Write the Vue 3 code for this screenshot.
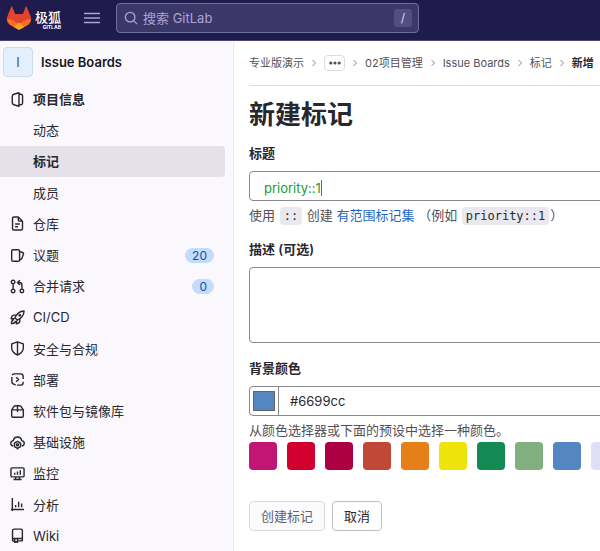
<script setup>
import { ref } from 'vue'

const search = ref('')
const title = ref('priority::1')
const description = ref('')
const color = ref('#6699cc')
const pickerColor = ref('#5487c2')

const nav = [
  { label: '项目信息', icon: 'project', bold: true },
  { label: '动态', sub: true },
  { label: '标记', sub: true, active: true, bold: true },
  { label: '成员', sub: true },
  { label: '仓库', icon: 'doc' },
  { label: '议题', icon: 'issues', count: 20 },
  { label: '合并请求', icon: 'merge', count: 0 },
  { label: 'CI/CD', icon: 'rocket' },
  { label: '安全与合规', icon: 'shield' },
  { label: '部署', icon: 'deploy' },
  { label: '软件包与镜像库', icon: 'package' },
  { label: '基础设施', icon: 'cloud' },
  { label: '监控', icon: 'monitor' },
  { label: '分析', icon: 'chart' },
  { label: 'Wiki', icon: 'book' },
]

const icons = {
  project: 'M9.6 .8 4.2 2.4Q2.4 3 2.4 4.6v6.8q0 1.600 1.800 2.200L9.600 15.200zM9.600 2.400h2q1.800 0 1.800 1.800v7.600q0 1.800-1.800 1.800h-2',
  doc: 'M8.8 1H4.2Q2.7 1 2.7 2.5v11Q2.7 15 4.2 15h7.6q1.5 0 1.5-1.5v-8zM8.8 1v3.2q0 1.3 1.3 1.3h3.2M5.5 8.6h5M5.5 11.5h3',
  issues: 'M3.3 1.8h5.4q1.5 0 1.5 1.5v9.4q0 1.5-1.5 1.5H3.3q-1.5 0-1.5-1.5V3.3q0-1.5 1.5-1.5zM10.2 3.6l3.2 1.2q1.3.5.9 1.8l-1.5 4.2q-.5 1.3-2.6 2.2',
  merge: 'M3.3 5.2v5.6M12.7 10.8V6.3q0-2.5-2.5-2.5H8.4M10.6 1.2 8 3.8l2.6 2.6M5.2 3.3a1.9 1.9 0 1 1-3.8 0a1.9 1.9 0 1 1 3.8 0M5.2 12.7a1.9 1.9 0 1 1-3.8 0a1.9 1.9 0 1 1 3.8 0M14.6 12.7a1.9 1.9 0 1 1-3.8 0a1.9 1.9 0 1 1 3.8 0',
  rocket: 'M5.2 8.2Q8.2 1.3 15 1q-.3 6.800-7.200 9.800zM5.200 8.200 7.800 10.800M6.500 5.500H4.200Q2 5.500 1.200 9.300l3.600-.4M10.500 9.500v2.300q0 2.200-3.800 3l.4-3.600M4.600 10.200Q1.800 10.500 1.500 14.500q4 0 4.300-2.900M11.300 5.700a.8.8 0 1 1-1.600 0a.8.8 0 1 1 1.600 0',
  shield: 'M8 1 1.800 3v4.500Q1.800 12.300 8 15q6.200-2.700 6.200-7.500V3zM8 1v14',
  deploy: 'M4 2h7.500q2.500 0 2.500 2.500V7.500M2 5.200v5.300q0 2.500 2.500 2.500M7.500 14h4q2.500 0 2.500-2.500V10.500M4 2 2.200 3M4.500 13l1.500 1M6.500 5.500 9.200 8l-2.700 2.500',
  package: 'M1.800 6.300h12.400v6.600q0 1.300-1.300 1.300H3.100q-1.300 0-1.300-1.300zM1.800 6.300 3.900 3Q4.500 1.800 5.800 1.800h4.400q1.300 0 1.900 1.200l2.100 3.300M8 1.800v6.800',
  cloud: 'M3.300 11.800Q.8 11.300.8 8.900.8 6.400 3.500 6 4.300 2.200 8 2.200t4.500 3.800q2.700.4 2.700 2.900t-2.500 2.900M8 6.700l3.300 1.900v3.800L8 14.300l-3.300-1.900V8.600zM9.100 10.500a1.100 1.100 0 1 1-2.200 0a1.100 1.100 0 1 1 2.200 0M8 14.300v1.200',
  monitor: 'M2.300 2h11.400q1.300 0 1.300 1.300v7q0 1.300-1.300 1.300H2.300Q1 11.600 1 10.300v-7Q1 2 2.300 2zM6 11.600v2.800M10 11.600v2.800M3.700 14.400h8.600M5 7.200v2M8 5.800v3.400M11 4.600v4.600',
  chart: 'M2.500 1v14M1 13.300h14M6 8.500v2.500M9.200 5v6M12.400 7v4',
  book: 'M4.500 1.200h7.400q1.300 0 1.300 1.300v8.700H4.500q-1.900 0-1.900 1.500t1.900 1.500M2.700 12.500V3q0-1.800 1.800-1.800M8 13.700h5.200v-2.500M5 11.500v4l1.500-1 1.500 1v-4',
}

const crumbs = ['专业版演示', '…', '02项目管理', 'Issue Boards', '标记', '新增']
const presets = [
  ['#c21675', '品红'], ['#d1002f', '深红'], ['#ad0043', '玫瑰红'], ['#c04836', '暗珊瑚'],
  ['#e67e1a', '胡萝卜橙'], ['#ece40b', '黄色'], ['#138a53', '绿色'], ['#80b080', '深海绿'],
  ['#5487c2', '蓝色'], ['#dfdff7', '薰衣草'], ['#330066', '深紫'],
]
</script>

<template>
  <div class="page">
    <header class="topbar">
      <a class="brand" href="#" aria-label="极狐 GitLab">
        <svg class="fox" viewBox="0 0 26 24" aria-hidden="true">
          <path fill="#e2432a" d="M5.300.5Q6 0 6.300.8L9.100 8h7.800L19.700.8q.4-.8 1 0l4 9.700q1.600 4.800-2.200 8L13 24 3.500 18.500q-3.800-3.200-2.200-8z" />
          <path fill="#fc6d26" d="M1 13.500q2.700-1.200 5.200.6L18.200 21 13 24 3.500 18.500Q1.200 16.500 1 13.500zM25 13.500q-2.700-1.200-5.200.6L7.800 21 13 24l9.500-5.500q2.300-2 2.500-5z" />
          <path fill="#fca326" d="M13 16.500 18.300 20.900 13 24 7.700 20.900z" />
        </svg>
        <span class="wordmark"><b>极狐</b><small>GITLAB</small></span>
      </a>
      <button class="burger" type="button" aria-label="菜单">
        <svg viewBox="0 0 16 12" aria-hidden="true"><path d="M0 1.500h16M0 6h16M0 10.500h16" /></svg>
      </button>
      <label class="search">
        <svg viewBox="0 0 16 16" aria-hidden="true"><circle cx="7" cy="7" r="5.500" /><path d="m11 11 4 4" /></svg>
        <input v-model="search" type="text" placeholder="搜索 GitLab" aria-label="搜索 GitLab">
        <kbd>/</kbd>
      </label>
    </header>

    <div class="body">
      <aside class="sidebar">
        <a class="project" href="#"><span class="avatar">I</span><b>Issue Boards</b></a>
        <ul class="nav">
          <li v-for="item in nav" :key="item.label">
            <a href="#" class="item" :class="{ active: item.active, bold: item.bold }">
              <span class="icon">
                <svg v-if="item.icon" viewBox="0 0 16 16" aria-hidden="true"><path :d="icons[item.icon]" /></svg>
              </span>
              <span>{{ item.label }}</span>
              <span v-if="item.count !== undefined" class="badge">{{ item.count }}</span>
            </a>
          </li>
        </ul>
      </aside>

      <main class="main">
        <nav class="crumbs">
          <template v-for="(c, i) in crumbs" :key="c">
            <svg v-if="i" class="sep" viewBox="0 0 6 8" aria-hidden="true"><path d="m1.500 1 3 3-3 3" /></svg>
            <button v-if="c === '…'" class="more" type="button" aria-label="显示更多">
              <svg viewBox="0 0 12 4" aria-hidden="true"><circle cx="1.800" cy="2" r="1.600" /><circle cx="6" cy="2" r="1.600" /><circle cx="10.200" cy="2" r="1.600" /></svg>
            </button>
            <a v-else href="#" :class="{ current: i === crumbs.length - 1 }">{{ c }}</a>
          </template>
        </nav>

        <h1>新建标记</h1>
        <form class="form" @submit.prevent>
          <div class="group">
            <label for="title">标题</label>
            <div class="field title-field">
              <input id="title" v-model="title" type="text" size="6"><span class="caret"></span>
            </div>
            <p class="help">使用 <code>::</code> 创建 <a href="#">有范围标记集</a> （例如 <code>priority::1</code>）</p>
          </div>
          <div class="group">
            <label for="description">描述 (可选)</label>
            <textarea id="description" v-model="description" class="field"></textarea>
          </div>
          <div class="group">
            <label for="color">背景颜色</label>
            <div class="field color-field">
              <input v-model="pickerColor" type="color" aria-label="选择颜色">
              <input id="color" v-model="color" type="text">
            </div>
            <p class="help">从颜色选择器或下面的预设中选择一种颜色。</p>
            <div class="presets">
              <button v-for="[hex, name] in presets" :key="hex" type="button" :aria-label="name" :style="{ backgroundColor: hex }" @click="color = pickerColor = hex"></button>
            </div>
          </div>
          <div class="actions">
            <button class="btn muted" type="submit" disabled>创建标记</button>
            <button class="btn" type="button">取消</button>
          </div>
        </form>
      </main>
    </div>
  </div>
</template>

<style>
body {
  margin: 0;
  overflow-x: hidden;
}
</style>

<style scoped>
.page {
  display: flex;
  flex-direction: column;
  min-height: 100vh;
  font: 13px/20px Inter, "Noto Sans CJK SC", sans-serif;
  color: #28272d;
  background: #fff;
}
.page *, .page *::before { box-sizing: border-box; }
a { color: inherit; text-decoration: none; }
button, input, textarea { font: inherit; color: inherit; margin: 0; }
svg { display: block; fill: none; stroke: currentColor; flex: none; }

.topbar {
  display: flex;
  align-items: flex-start;
  height: 41px;
  padding: 3px 6px 0;
  background: #1f1b4d;
  border-bottom: 1px solid #4a467b;
}
.brand { display: flex; align-items: center; gap: 3px; height: 30px; color: #fff; }
.fox { width: 26px; height: 24px; stroke: none; }
.wordmark { display: flex; flex-direction: column; align-items: flex-end; width: 26px; padding-top: 3px; }
.wordmark b { font-size: 13px; line-height: 14px; font-weight: 500; }
.wordmark small { font-size: 5px; line-height: 6px; font-weight: 700; }
.burger {
  display: flex;
  align-items: center;
  height: 30px;
  margin: 0 16px 0 23px;
  padding: 0;
  border: 0;
  background: none;
  color: #aaa5d6;
}
.burger svg { width: 16px; height: 12px; stroke-width: 1.5; }
.search {
  display: flex;
  align-items: center;
  gap: 5px;
  flex: 0 1 303px;
  min-width: 0;
  height: 30px;
  padding: 0 6px 0 7px;
  border: 1px solid #716da0;
  border-radius: 4px;
  background: #3b3768;
  color: #aaa5d6;
}
.search svg { width: 14px; height: 14px; stroke-width: 1.5; }
.search input { flex: 1; min-width: 0; padding: 0; border: 0; outline: 0; background: none; }
.search input::placeholder { color: #aaa5d6; opacity: 1; }
kbd {
  width: 18px;
  height: 18px;
  border-radius: 3px;
  background: #524e80;
  color: #dcd9f5;
  font: 12px/18px Inter, sans-serif;
  text-align: center;
}

.body { display: flex; flex: 1; }
.sidebar {
  display: flex;
  flex-direction: column;
  flex: 0 0 234px;
  background: #faf8fd;
  border-right: 1px solid #ececef;
}
.project { display: flex; align-items: center; gap: 8px; height: 42px; padding-left: 3px; }
.project b { font-weight: 600; color: #18171d; }
.avatar {
  width: 30px;
  height: 30px;
  border: 1px solid #cfdde8;
  border-radius: 4px;
  background: #e3f0fb;
  color: #535158;
  line-height: 28px;
  text-align: center;
}
.nav {
  display: grid;
  grid-auto-rows: 1fr;
  flex: 1;
  gap: 1px;
  margin: 1px 0 0;
  padding: 0;
  list-style: none;
}
.nav li { display: flex; min-height: 30px; padding-right: 8px; }
.item {
  display: flex;
  align-items: center;
  flex: 1;
  padding: 0 11px 0 10px;
  border-radius: 0 4px 4px 0;
}
.icon { width: 23px; }
.icon svg { width: 15px; height: 15px; stroke-width: 1.5; stroke-linejoin: round; }
.bold { font-weight: 600; }
.active { background: #e4e1e8; }
.badge {
  margin-left: auto;
  padding: 0 7px;
  border-radius: 8px;
  background: #c2dcfa;
  color: #1c5099;
  font-size: 12px;
  line-height: 15px;
}

.main { flex: 1; min-width: 0; padding-left: 15px; overflow: hidden; }
.crumbs {
  display: flex;
  align-items: center;
  gap: 7px;
  height: 45px;
  border-bottom: 1px solid #dcdcde;
  font-size: 11px;
  white-space: nowrap;
  color: #535158;
}
.crumbs .current { font-weight: 700; color: #28272d; }
.sep { width: 6px; height: 8px; color: #89888d; }
.more {
  display: grid;
  place-items: center;
  width: 21px;
  height: 16px;
  padding: 0;
  border: 1px solid #dcdcde;
  border-radius: 4px;
  background: #fff;
}
.more svg { width: 12px; height: 4px; fill: currentColor; stroke: none; }
h1 { margin: 11px 0 10px; font-size: 26px; line-height: 36px; font-weight: 600; }

.form { margin-right: -16px; }
.group { display: flex; flex-direction: column; margin-bottom: 15px; }
.group:first-child { margin-bottom: 12px; }
.group label { margin-bottom: 8px; font-weight: 600; }
.field { border: 1px solid #89888d; border-radius: 4px; background: #fff; }
.field input { border: 0; outline: 0; background: none; }
.title-field { display: flex; align-items: center; height: 30px; padding: 3px 14px 0; color: #169b35; }
.title-field input { field-sizing: content; padding: 0; }
.caret { width: 1px; height: 16px; background: currentColor; }
.help { margin: 2px 0 0; line-height: 24px; color: #535158; white-space: nowrap; }
.help a { color: #1f65c4; }
code {
  margin: 0 1px;
  padding: 2px 4px;
  border-radius: 4px;
  background: #e9e8ee;
  color: #28272d;
  font: 12px/16px "DejaVu Sans Mono", monospace;
}
textarea { height: 76px; padding: 6px 10px; resize: none; }
.color-field { display: flex; height: 30px; }
.color-field input[type="color"] {
  width: 29px;
  height: 28px;
  padding: 4px 3px;
  border-right: 1px solid #89888d;
  appearance: none;
}
.color-field input[type="color"]::-webkit-color-swatch-wrapper { padding: 0; }
.color-field input[type="color"]::-webkit-color-swatch { border: 1px solid #646569; border-radius: 0; }
.color-field input[type="text"] { flex: 1; padding: 0 11px; }
.presets { display: flex; gap: 10px; }
.presets button { flex: none; width: 28px; height: 28px; padding: 0; border: 0; border-radius: 4px; }
.actions { display: flex; gap: 7px; padding-top: 16px; }
.btn {
  height: 30px;
  padding: 0 11px;
  border: 1px solid #bfbfc3;
  border-radius: 4px;
  background: #fff;
}
.muted { border-color: #dcdcde; background: #fbfafd; color: #626168; }
</style>
